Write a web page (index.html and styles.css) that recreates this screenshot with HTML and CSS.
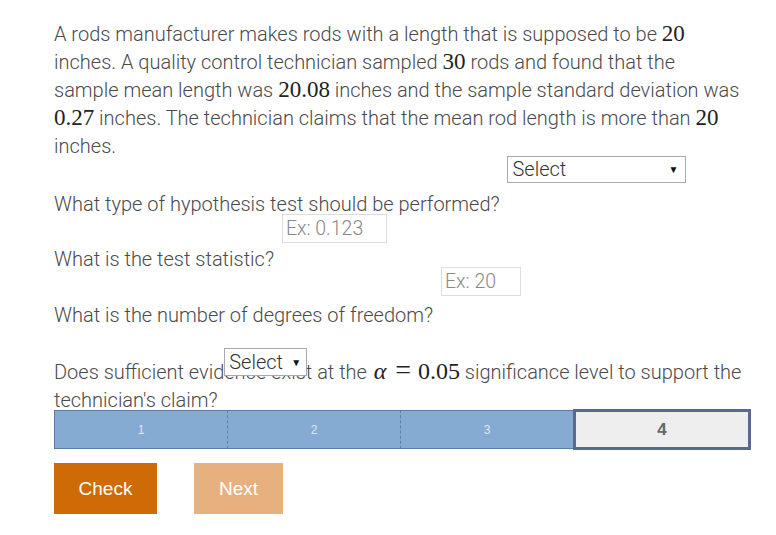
FILE: index.html
```html
<!DOCTYPE html>
<html lang="en">
<head>
    <meta charset="UTF-8">
    <title>Hypothesis Test</title>
    <link rel="stylesheet" href="styles.css">
</head>
<body>
    <div class="activity">
        <p class="prompt">A rods manufacturer makes rods with a length that is supposed to be <span class="math">20</span> inches. A quality control technician sampled <span class="math">30</span> rods and found that the sample mean length was <span class="math">20.08</span> inches and the sample standard deviation was <span class="math">0.27</span> inches. The technician claims that the mean rod length is more than <span class="math">20</span> inches.</p>

        <!-- Questions -->
        <p class="question q-type">What type of hypothesis test should be performed? <span class="dropdown wide"><span>Select</span><span class="arrow">&#9660;</span></span></p>
        <p class="question q-stat">What is the test statistic? <span class="answer w-long">Ex: 0.123</span></p>
        <p class="question q-df">What is the number of degrees of freedom? <span class="answer w-short">Ex: 20</span></p>
        <p class="question q-claim">Does sufficient evid<span class="overlay-anchor"><span class="dropdown small"><span>Select</span><span class="arrow">&#9660;</span></span></span>ence exist at the <span class="math alpha">&alpha;</span> <span class="math eq">=</span> <span class="math big">0.05</span> significance level to support the technician's claim?</p>

        <!-- Progress -->
        <div class="progress">
            <div class="step">1</div>
            <div class="step">2</div>
            <div class="step">3</div>
            <div class="step current">4</div>
        </div>

        <div class="actions">
            <button class="btn check">Check</button>
            <button class="btn next">Next</button>
        </div>
    </div>
</body>
</html>
```

FILE: styles.css
```css
body { margin: 0; background: #fff; font-family: Roboto, "Liberation Sans", sans-serif; font-weight: 300; color: #4a4a4a; }
.activity { width: 697px; padding: 20px 0 0 54px; }
p { margin: 0; font-size: 20px; line-height: 28px; }
.prompt { width: 688px; }
.math { font-family: "Liberation Serif", "DejaVu Serif", serif; font-weight: 400; font-size: 23px; color: #222; }
.math.alpha { font-style: italic; font-size: 24px; margin-left: 2px; }
.math.eq { display: inline-block; font-size: 28px; line-height: 20px; margin: 0 2px 0 4px; }
.math.big { font-size: 24px; }

.dropdown { display: inline-flex; align-items: center; justify-content: space-between; box-sizing: border-box; height: 27px; padding: 0 6px 0 5px; border: 1px solid #a9a9a9; background: #fff; color: #333; font-size: 20px; line-height: 25px; }
.dropdown .arrow { font-size: 10px; color: #111; margin-left: 6px; }
.dropdown.wide { width: 179px; }
.q-type { margin-top: -4px; }
.q-type .dropdown { vertical-align: 35px; margin-left: 2px; }

.answer { display: inline-block; box-sizing: border-box; height: 29px; padding: 0 3px; border: 1px solid #ddd; color: #888; font-size: 19.5px; line-height: 27px; }
.w-long { width: 105px; vertical-align: 31px; margin-left: 3px; }
.w-short { width: 80px; vertical-align: 34px; margin-left: 3px; }
.q-stat { margin-top: -4px; }
.q-df { margin-top: -6px; }
.q-claim { margin-top: 28px; }

.overlay-anchor { position: relative; }
.dropdown.small { position: absolute; left: 0; top: -12px; width: 83px; height: 28px; padding: 0 5px 0 4px; }
.dropdown.small .arrow { margin-left: 4px; }

.progress { display: flex; margin-top: -4px; height: 39px; }
.step { flex: 1; display: flex; align-items: center; justify-content: center; background: #85abd2; border-top: 1px solid #5b7ea6; border-bottom: 1px solid #5b7ea6; border-left: 1px dashed #5b7ea6; color: #dde8f4; font-family: "Liberation Sans", Arial, sans-serif; font-weight: 400; font-size: 12px; }
.step:first-child { border-left: 1px solid #5b7ea6; }
.step.current { margin: -1px 0; border: 3px solid #5a6a8c; background: #eeeeee; color: #666; font-size: 17px; font-weight: 700; }

.actions { display: flex; gap: 37px; margin-top: 14px; }
.btn { height: 51px; border: none; color: #fff; font-family: "Liberation Sans", Arial, sans-serif; font-size: 19px; cursor: pointer; }
.check { width: 103px; background: #cf6b06; }
.next { width: 89px; background: #e7b17f; }
```
